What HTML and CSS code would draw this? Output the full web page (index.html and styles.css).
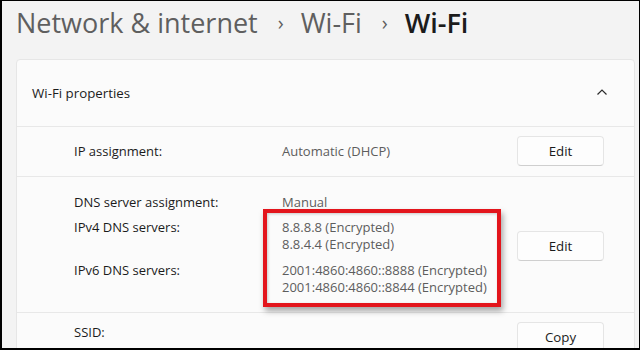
FILE: index.html
```html
<!DOCTYPE html>
<html>
<head>
<meta charset="utf-8">
<link rel="stylesheet" href="styles.css">
</head>
<body>
<div class="frame">
  <h1 class="crumbs">
    <span class="crumb">Network &amp; internet</span>
    <span class="sep">›</span>
    <span class="crumb">Wi-Fi</span>
    <span class="sep">›</span>
    <span class="crumb current">Wi-Fi</span>
  </h1>
  <section class="card">
    <div class="card-head">
      <span>Wi-Fi properties</span>
      <svg class="chev" width="12" height="8" viewBox="0 0 12 8"><polyline points="1.5,6.5 6,2 10.5,6.5" fill="none" stroke="#2b2b2b" stroke-width="1.2"/></svg>
    </div>
    <div class="row row-ip">
      <div class="label">IP assignment:</div>
      <div class="value">Automatic (DHCP)</div>
      <button class="btn">Edit</button>
    </div>
    <div class="row row-dns">
      <div class="dns-grid">
        <div class="label">DNS server assignment:</div>
        <div class="value">Manual</div>
        <div class="label">IPv4 DNS servers:</div>
        <div class="value">8.8.8.8 (Encrypted)<br>8.8.4.4 (Encrypted)</div>
        <div class="label">IPv6 DNS servers:</div>
        <div class="value">2001:4860:4860::8888 (Encrypted)<br>2001:4860:4860::8844 (Encrypted)</div>
      </div>
      <button class="btn">Edit</button>
    </div>
    <div class="row row-ssid">
      <div class="label">SSID:</div>
      <div class="value"></div>
      <button class="btn">Copy</button>
    </div>
  </section>
  <div class="highlight"></div>
</div>
</body>
</html>
```
FILE: styles.css
```css
* { box-sizing: border-box; }
html, body { margin: 0; padding: 0; }
body {
  font-family: "Open Sans", "Noto Sans", sans-serif;
  background: #000;
}
.frame {
  position: relative;
  width: 640px;
  height: 350px;
  overflow: hidden;
  background: #f3f3f3;
  border-style: solid;
  border-color: #000;
  border-width: 1px 1px 2px 2px;
}
.crumbs {
  margin: 0;
  height: 58px;
  padding: 4px 0 0 14px;
  display: flex;
  align-items: flex-start;
  font-size: 27px;
  font-weight: 400;
  color: #5f5f5f;
  line-height: 36px;
  letter-spacing: -0.1px;
}
.sep {
  font-size: 20px;
  margin: 0 17px 0 20px;
  color: #5f5f5f;
}
.crumb { letter-spacing: 0; }
.current { color: #1b1b1b; font-weight: 600; }
.card {
  margin-left: 14px;
  width: 619px;
  background: #fbfbfb;
  border: 1px solid #e6e6e6;
  border-radius: 4px 4px 0 0;
  font-size: 13px;
  color: #1b1b1b;
}
.card-head {
  height: 66px;
  display: flex;
  align-items: center;
  justify-content: space-between;
  padding: 0 26px 0 15px;
  font-size: 13.3px;
}
.chev { margin-top: -2px; }
.row {
  border-top: 1px solid #e8e8e8;
  display: grid;
  grid-template-columns: 208px 1fr 87px;
  padding: 0 30px 0 57px;
}
.row-ip {
  height: 50px;
  align-items: center;
}
.row-ip .label, .row-ip .value { margin-top: -1px; }
.row-ip .btn { margin-top: -1px; }
.value { color: #5d5d5d; }
.row-dns {
  grid-template-columns: 1fr 87px;
  align-items: center;
  padding-top: 17px;
  padding-bottom: 16px;
  height: 136px;
}
.dns-grid {
  display: grid;
  grid-template-columns: 208px 1fr;
  row-gap: 8px;
  line-height: 17px;
}
.dns-grid .label:nth-child(5), .dns-grid .value:nth-child(6) { margin-top: 1px; }
.row-dns .btn { margin-top: 1px; }
.row-ssid {
  align-items: start;
  padding-top: 9px;
}
.row-ssid .label { margin-top: 2px; line-height: 17px; }
.btn {
  width: 87px;
  height: 30px;
  font-family: inherit;
  font-size: 13.3px;
  color: #1b1b1b;
  background: #fdfdfd;
  border: 1px solid #e5e5e5;
  border-bottom-color: #cfcfcf;
  border-radius: 4px;
  padding: 0;
}
.highlight {
  position: absolute;
  left: 261px;
  top: 208px;
  width: 238px;
  height: 98px;
  border: 4px solid #e3151c;
  box-shadow: 2px 4px 6px rgba(0,0,0,0.35), inset 1px 1px 3px rgba(0,0,0,0.2);
}
```
